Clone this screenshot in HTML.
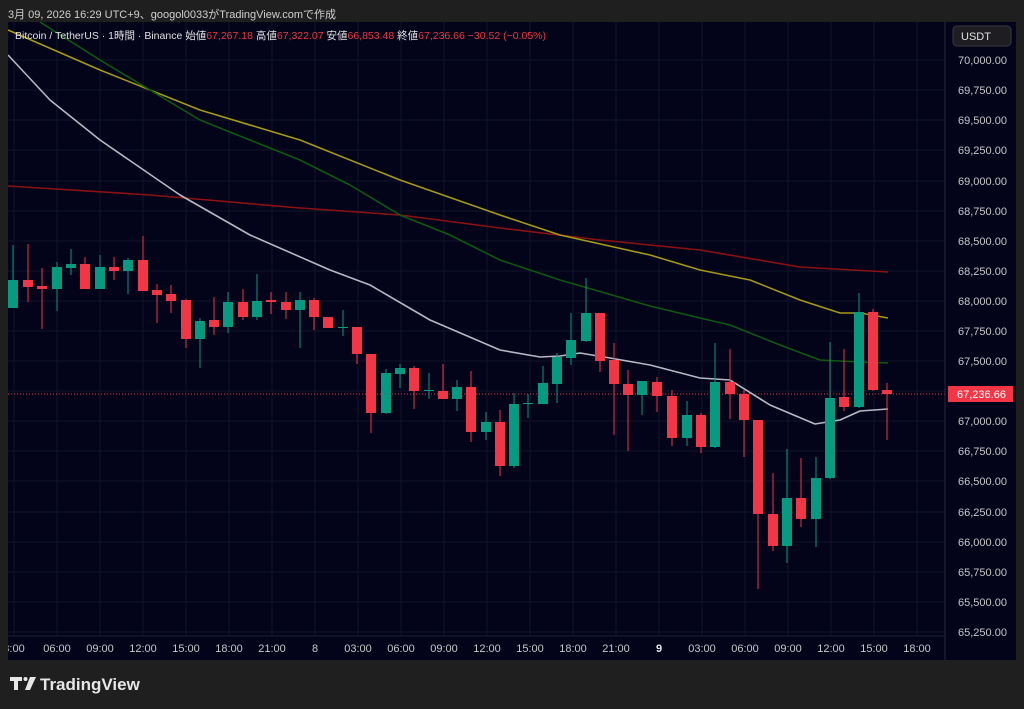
<!DOCTYPE html>
<html><head><meta charset="utf-8"><style>
body{margin:0;width:1024px;height:709px;background:#1f1f1f;overflow:hidden;font-family:"Liberation Sans","Noto Sans CJK JP",sans-serif;position:relative}
.t{position:absolute;color:#c8c8c8;font-size:11px;white-space:nowrap}
</style></head><body>
<div class="t" style="left:8px;top:6px;font-size:11px;color:#cfcfcf">3月 09, 2026 16:29 UTC+9、googol0033がTradingView.comで作成</div>
<svg style="position:absolute;left:0;top:0" width="1024" height="709" font-family="Liberation Sans, Noto Sans CJK JP, sans-serif">
<rect x="8" y="22" width="1008" height="638" fill="#03031a"/>
<g stroke="#121428" stroke-width="1">
<line x1="8" x2="945" y1="60" y2="60"/><line x1="8" x2="945" y1="90" y2="90"/><line x1="8" x2="945" y1="120" y2="120"/><line x1="8" x2="945" y1="150" y2="150"/><line x1="8" x2="945" y1="181" y2="181"/><line x1="8" x2="945" y1="211" y2="211"/><line x1="8" x2="945" y1="241" y2="241"/><line x1="8" x2="945" y1="271" y2="271"/><line x1="8" x2="945" y1="301" y2="301"/><line x1="8" x2="945" y1="331" y2="331"/><line x1="8" x2="945" y1="361" y2="361"/><line x1="8" x2="945" y1="391" y2="391"/><line x1="8" x2="945" y1="421" y2="421"/><line x1="8" x2="945" y1="451" y2="451"/><line x1="8" x2="945" y1="481" y2="481"/><line x1="8" x2="945" y1="512" y2="512"/><line x1="8" x2="945" y1="542" y2="542"/><line x1="8" x2="945" y1="572" y2="572"/><line x1="8" x2="945" y1="602" y2="602"/><line x1="8" x2="945" y1="632" y2="632"/>
</g>
<g stroke="#121428"><line x1="14" x2="14" y1="22" y2="636"/><line x1="57" x2="57" y1="22" y2="636"/><line x1="100" x2="100" y1="22" y2="636"/><line x1="143" x2="143" y1="22" y2="636"/><line x1="186" x2="186" y1="22" y2="636"/><line x1="229" x2="229" y1="22" y2="636"/><line x1="272" x2="272" y1="22" y2="636"/><line x1="315" x2="315" y1="22" y2="636"/><line x1="358" x2="358" y1="22" y2="636"/><line x1="401" x2="401" y1="22" y2="636"/><line x1="444" x2="444" y1="22" y2="636"/><line x1="487" x2="487" y1="22" y2="636"/><line x1="530" x2="530" y1="22" y2="636"/><line x1="573" x2="573" y1="22" y2="636"/><line x1="616" x2="616" y1="22" y2="636"/><line x1="659" x2="659" y1="22" y2="636"/><line x1="702" x2="702" y1="22" y2="636"/><line x1="745" x2="745" y1="22" y2="636"/><line x1="788" x2="788" y1="22" y2="636"/><line x1="831" x2="831" y1="22" y2="636"/><line x1="874" x2="874" y1="22" y2="636"/><line x1="917" x2="917" y1="22" y2="636"/></g>
<line x1="8" x2="945" y1="394" y2="394" stroke="#f23645" stroke-dasharray="1,2" stroke-width="1"/>
<g fill="none" stroke-width="1.6" stroke-linejoin="round">
<polyline stroke="#8b1212" points="8,186 150,195 300,208 400,215 500,228 600,240 700,250 800,267 888,272"/>
<polyline stroke="#a59a12" points="8,30 100,70 200,110 300,140 400,180 500,215 560,235 650,255 700,270 750,280 800,300 840,313 860,313 888,318"/>
<polyline stroke="#0d5a10" points="40,22 100,60 200,120 300,160 350,185 400,215 450,235 500,260 560,280 650,306 700,318 730,325 780,345 820,360 860,362 888,363"/>
<polyline stroke="#b8b8c4" points="8,55 50,100 100,140 180,195 250,235 330,270 370,285 430,320 500,350 540,357 560,356 580,353 610,358 650,365 700,378 730,380 770,405 815,424 840,420 860,411 888,409"/>
</g>
<g id="c"></g>
<line x1="945" x2="945" y1="22" y2="660" stroke="#2a2a35"/>
<line x1="8" x2="945" y1="636" y2="636" stroke="#1e2030"/>
<rect x="953" y="26" width="58" height="20" rx="4" fill="#1e1e22" stroke="#3a3a40"/>
<text x="961" y="40" fill="#e0e0e0" font-size="11">USDT</text>
<g fill="#c8c8c8" font-size="11" text-anchor="start">
<text x="958" y="64">70,000.00</text><text x="958" y="94">69,750.00</text><text x="958" y="124">69,500.00</text><text x="958" y="154">69,250.00</text><text x="958" y="185">69,000.00</text><text x="958" y="215">68,750.00</text><text x="958" y="245">68,500.00</text><text x="958" y="275">68,250.00</text><text x="958" y="305">68,000.00</text><text x="958" y="335">67,750.00</text><text x="958" y="365">67,500.00</text><text x="958" y="425">67,000.00</text><text x="958" y="455">66,750.00</text><text x="958" y="485">66,500.00</text><text x="958" y="516">66,250.00</text><text x="958" y="546">66,000.00</text><text x="958" y="576">65,750.00</text><text x="958" y="606">65,500.00</text><text x="958" y="636">65,250.00</text>
</g>
<rect x="948" y="386" width="65" height="16" fill="#f23645"/>
<text x="957" y="398" fill="#fff" font-size="11">67,236.66</text>
<g fill="#c8c8c8" font-size="11" text-anchor="middle">
<text x="14" y="652">3:00</text><text x="57" y="652">06:00</text><text x="100" y="652">09:00</text><text x="143" y="652">12:00</text><text x="186" y="652">15:00</text><text x="229" y="652">18:00</text><text x="272" y="652">21:00</text><text x="315" y="652">8</text><text x="358" y="652">03:00</text><text x="401" y="652">06:00</text><text x="444" y="652">09:00</text><text x="487" y="652">12:00</text><text x="530" y="652">15:00</text><text x="573" y="652">18:00</text><text x="616" y="652">21:00</text><text x="659" y="652" font-weight="bold" fill="#e8e8e8">9</text><text x="702" y="652">03:00</text><text x="745" y="652">06:00</text><text x="788" y="652">09:00</text><text x="831" y="652">12:00</text><text x="874" y="652">15:00</text><text x="917" y="652">18:00</text>
</g>
<rect x="0" y="22" width="8" height="638" fill="#1f1f1f"/>
<text x="15" y="39" font-size="10.5" fill="#e0e0e0">Bitcoin / TetherUS · 1時間 · Binance  始値<tspan fill="#f23645">67,267.18</tspan>  高値<tspan fill="#f23645">67,322.07</tspan>  安値<tspan fill="#f23645">66,853.48</tspan>  終値<tspan fill="#f23645">67,236.66  −30.52 (−0.05%)</tspan></text>
<g fill="#e6e6e6"><path d="M10 677h12v4h-4v9h-4v-9h-4z"/><circle cx="25.5" cy="679" r="2"/><path d="M30 677h6l-6 13h-5z"/></g>
<text x="40" y="690" font-size="17" font-weight="bold" fill="#e6e6e6">TradingView</text>
</svg>
<script>
var d=[[13,'g',280,308,245,308],[28,'r',280,287,244,302],[42,'r',286,289,268,329],[57,'g',267,289,262,311],[71,'g',264,268,249,275],[85,'r',264,289,257,289],[100,'g',267,289,255,289],[114,'r',267,271,257,280],[128,'g',260,271,258,294],[143,'r',260,291,236,291],[157,'r',290,295,284,323],[171,'r',294,301,285,313],[186,'r',300,339,299,348],[200,'g',321,339,318,368],[214,'r',320,327,297,335],[228,'g',302,327,292,333],[243,'r',302,317,289,320],[257,'g',301,317,274,320],[271,'r',300,302,292,314],[286,'r',302,310,292,319],[300,'g',300,310,292,348],[314,'r',300,317,298,330],[328,'r',317,328,317,328],[343,'g',327,328,310,336],[357,'r',327,354,327,364],[371,'r',354,413,354,433],[386,'g',373,413,369,414],[400,'g',368,374,364,388],[414,'r',368,391,366,409],[429,'g',390,391,373,399],[443,'r',391,399,364,399],[457,'g',387,399,380,411],[471,'r',387,432,371,442],[486,'g',422,432,412,440],[500,'r',422,466,410,476],[514,'g',404,466,393,468],[528,'g',403,404,394,418],[543,'g',383,404,366,403],[557,'g',357,384,353,403],[571,'g',340,358,313,365],[586,'g',313,341,278,342],[600,'r',313,361,313,372],[614,'r',360,384,343,435],[628,'r',384,395,370,451],[642,'g',381,395,381,415],[657,'r',382,396,377,412],[672,'r',396,438,390,446],[687,'g',415,438,401,446],[701,'r',415,447,413,453],[715,'g',382,447,343,448],[730,'r',382,394,349,419],[744,'r',394,420,390,457],[758,'r',420,514,420,589],[773,'r',514,546,473,551],[787,'g',498,546,449,563],[801,'r',498,519,458,527],[816,'g',478,519,457,547],[830,'g',398,478,342,479],[844,'r',397,407,349,411],[859,'g',312,407,293,408],[873,'r',312,390,309,391],[887,'r',390,394,383,440]];
var s='';d.forEach(function(c){var col=c[1]=='g'?'#089981':'#f23645';s+='<line x1="'+c[0]+'" x2="'+c[0]+'" y1="'+c[4]+'" y2="'+c[5]+'" stroke="'+col+'"/><rect x="'+(c[0]-5)+'" y="'+c[2]+'" width="10" height="'+Math.max(1,c[3]-c[2])+'" fill="'+col+'"/>';});
document.getElementById('c').innerHTML=s;
</script>
</body></html>
